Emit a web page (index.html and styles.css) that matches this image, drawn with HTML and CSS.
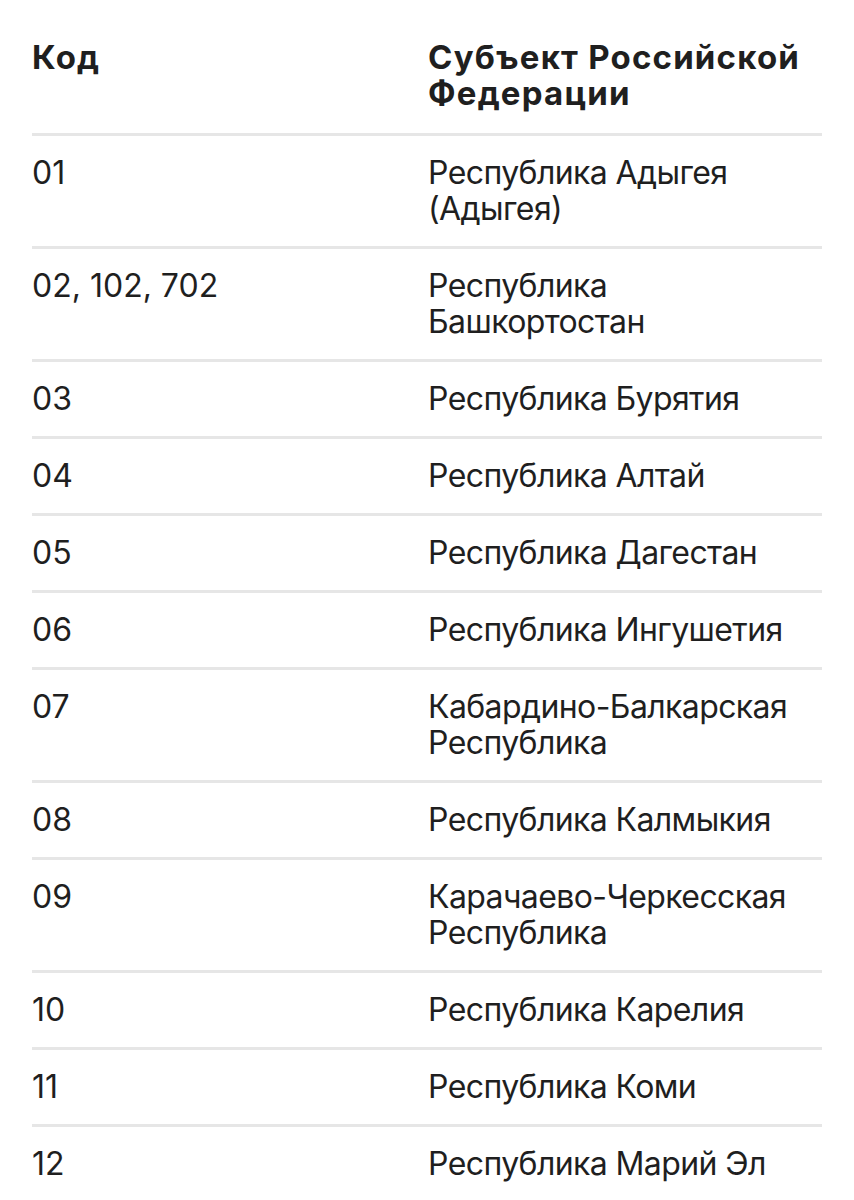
FILE: index.html
```html
<!DOCTYPE html>
<html lang="ru">
<head>
<meta charset="utf-8">
<title>Коды регионов</title>
<link rel="stylesheet" href="styles.css">
</head>
<body>
<div class="table">
  <div class="row head">
    <div class="cell">Код</div>
    <div class="cell">Субъект Российской Федерации</div>
  </div>
  <div class="row"><div class="cell">01</div><div class="cell name">Республика Адыгея (Адыгея)</div></div>
  <div class="row"><div class="cell">02, 102, 702</div><div class="cell name">Республика Башкортостан</div></div>
  <div class="row"><div class="cell">03</div><div class="cell name">Республика Бурятия</div></div>
  <div class="row"><div class="cell">04</div><div class="cell name">Республика Алтай</div></div>
  <div class="row"><div class="cell">05</div><div class="cell name">Республика Дагестан</div></div>
  <div class="row"><div class="cell">06</div><div class="cell name">Республика Ингушетия</div></div>
  <div class="row"><div class="cell">07</div><div class="cell name">Кабардино-Балкарская Республика</div></div>
  <div class="row"><div class="cell">08</div><div class="cell name">Республика Калмыкия</div></div>
  <div class="row"><div class="cell">09</div><div class="cell name">Карачаево-Черкесская Республика</div></div>
  <div class="row"><div class="cell">10</div><div class="cell name">Республика Карелия</div></div>
  <div class="row"><div class="cell">11</div><div class="cell name">Республика Коми</div></div>
  <div class="row"><div class="cell">12</div><div class="cell name">Республика Марий Эл</div></div>
</div>
</body>
</html>
```
FILE: styles.css
```css
html, body {
  margin: 0;
  padding: 0;
  background: #ffffff;
}
body {
  font-family: "Inter", "Liberation Sans", sans-serif;
  color: #1f1f1f;
  font-size: 32px;
  line-height: 36px;
}
.table {
  width: 790px;
  margin-left: 32px;
}
.row {
  display: grid;
  grid-template-columns: 396px 1fr;
  padding: 19px 0 19px;
  border-bottom: 3px solid #e6e6e6;
}
.row.head {
  padding: 39px 0 22px;
  font-weight: 700;
  font-size: 33px;
  letter-spacing: 1.2px;
}
.cell {
  padding-right: 12px;
}
.name {
  letter-spacing: -0.6px;
}
```
